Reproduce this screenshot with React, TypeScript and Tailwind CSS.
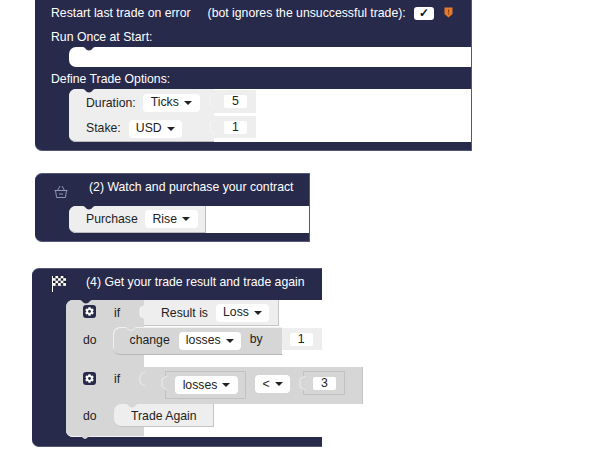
import { FaCog } from 'react-icons/fa'
import type { ReactNode } from 'react'

function Caret() {
  return <span className="ml-[5px] inline-block h-0 w-0 border-x-[4px] border-t-[4px] border-x-transparent border-t-[#222]" />
}

function Dropdown({ label, className = '' }: { label: string; className?: string }) {
  return (
    <span className={`flex h-[18px] items-center justify-center rounded-[4px] bg-white text-[#222] ${className}`}>
      {label}
      <Caret />
    </span>
  )
}

function NumField({ value, className = '' }: { value: string; className?: string }) {
  return (
    <span className={`flex h-[13px] w-[23px] items-center justify-center rounded-[2px] bg-white text-[#222] ${className}`}>
      {value}
    </span>
  )
}

// little dip at the top of a statement block
function Notch({ color, left = 14, line }: { color: string; left?: number; line?: string }) {
  return (
    <svg className="absolute top-0" style={{ left }} width="12" height="4" viewBox="0 0 12 4">
      <path d="M0 0 C2 0 3 3.5 6 3.5 C9 3.5 10 0 12 0" fill={color} stroke={line ?? 'none'} strokeWidth="0.8" />
    </svg>
  )
}

// bump under a statement block
function Bump({ color, left = 14 }: { color: string; left?: number }) {
  return (
    <svg className="absolute bottom-[-3px]" style={{ left }} width="10" height="3" viewBox="0 0 10 3">
      <path d="M0 0 C2 0 3 3 5 3 C7 3 8 0 10 0Z" fill={color} />
    </svg>
  )
}

// value tab sticking out to the left of an input
function Tab({ fill, stroke = '#f8f8f8', top = 4, left = -6 }: { fill: string; stroke?: string; top?: number; left?: number }) {
  return (
    <svg className="absolute" style={{ top, left }} width="7" height="14" viewBox="0 0 7 14">
      <path d="M7 0.5 C4 0.5 5 2 3.5 2 C2 2 2 4 2 7 C2 10 2 12 3.5 12 C5 12 4 13.5 7 13.5" fill={fill} stroke={stroke} strokeWidth="0.8" />
    </svg>
  )
}

function GearBox() {
  return (
    <span className="flex h-[13px] w-[13px] items-center justify-center rounded-[3px] bg-[#282a4c] text-white">
      <FaCog size={9} />
    </span>
  )
}

function Basket() {
  return (
    <svg width="14" height="14" viewBox="0 0 14 14" fill="none" stroke="#9da0b8" strokeWidth="0.9">
      <path d="M0.5 5.5H13.5M1.5 5.5L2.6 12.5H11.4L12.5 5.5M3.5 5.5L6 1M10.5 5.5L8 1M5 9H9" />
    </svg>
  )
}

function CheckerFlag() {
  const cells: ReactNode[] = []
  for (let r = 0; r < 4; r++) {
    for (let c = 0; c < 5; c++) {
      cells.push(
        <rect key={`${r}-${c}`} x={2 + c * 2.6} y={1 + r * 2.4} width="2.6" height="2.4" fill={(r + c) % 2 ? '#fff' : '#1b1b2b'} />,
      )
    }
  }
  return (
    <svg width="16" height="17" viewBox="0 0 16 17">
      <rect x="1" y="1" width="1" height="16" fill="#fff" />
      <rect x="2" y="1" width="13" height="9.6" fill="#fff" />
      {cells}
    </svg>
  )
}

function Shield() {
  return (
    <svg width="9" height="11" viewBox="0 0 9 11">
      <path d="M0.5 0.5H8.5V7L4.5 10.5L0.5 7Z" fill="#e8792b" />
      <rect x="4" y="2.5" width="1.2" height="3" fill="#8a4413" />
      <rect x="4" y="6.2" width="1.2" height="1.2" fill="#8a4413" />
    </svg>
  )
}

const NAVY = '#282a4c'
const LIGHT = '#eeeeee'
const GREY = '#d6d6d6'

export default function App() {
  return (
    <div
      className="h-[467px] w-[612px] overflow-hidden bg-white text-[12.25px] leading-none text-[#222]"
      style={{ fontFamily: '"Liberation Sans", Arial, sans-serif' }}
    >
      {/* (1) trade options, top is cut off */}
      <div className="ml-[35px] w-[437px] rounded-bl-[7px] border-r border-b border-[#55577a] bg-[#282a4c] text-white">
        <div className="relative h-[47px]">
          <div className="flex h-[26px] items-center pl-[16px]">
            <span>Restart last trade on error</span>
            <span className="ml-[17px]">(bot ignores the unsuccessful trade):</span>
            <span className="ml-[8px] flex h-[13px] w-[20px] items-center justify-center rounded-[3px] bg-white text-[12px] font-bold text-[#111]">✓</span>
            <span className="ml-[10px] -translate-y-[1px]"><Shield /></span>
          </div>
          <div className="flex h-[21px] items-center pt-[2px] pl-[16px]">Run Once at Start:</div>
        </div>
        <div className="relative ml-[34px] h-[20px] rounded-l-[7px] bg-white">
          <Notch color={NAVY} />
        </div>
        <div className="flex h-[22px] items-center pt-[2px] pl-[16px]">Define Trade Options:</div>
        <div className="relative ml-[34px] flex h-[53px] flex-col rounded-l-[7px] bg-white text-[#222]">
          <div className="flex h-[27px]">
            <div className="flex w-[145px] items-center rounded-tl-[7px] bg-[#eeeeee] pl-[17px]">
              <span className="pt-[2px]">Duration:</span>
              <Dropdown label="Ticks" className="ml-[7px] w-[57px]" />
            </div>
            <div className="relative mt-[1px] flex h-[23px] w-[42px] items-center bg-[#eeeeee] pl-[10px]">
              <Tab fill={LIGHT} top={4} />
              <NumField value="5" />
            </div>
          </div>
          <div className="flex h-[26px]">
            <div className="flex w-[145px] items-center rounded-bl-[7px] border-b border-[#b9b9b9] bg-[#eeeeee] pl-[17px]">
              <span>Stake:</span>
              <Dropdown label="USD" className="ml-[8px] w-[53px]" />
            </div>
            <div className="relative flex h-[22px] w-[42px] items-center bg-[#eeeeee] pl-[10px]">
              <Tab fill={LIGHT} top={4} />
              <NumField value="1" />
            </div>
          </div>
          <Notch color={NAVY} />
        </div>
        <div className="h-[8px]" />
      </div>

      {/* (2) purchase */}
      <div className="mt-[22px] ml-[35px] w-[275px] rounded-l-[7px] border-t border-r border-b border-[#55577a] bg-[#282a4c] text-white">
        <div className="flex h-[32px] items-center">
          <span className="ml-[19px] translate-y-[2px]"><Basket /></span>
          <span className="ml-[21px] -translate-y-[3px]">(2) Watch and purchase your contract</span>
        </div>
        <div className="relative ml-[34px] h-[27px] rounded-l-[7px] bg-white text-[#222]">
          <div className="flex h-[27px] w-[137px] items-center rounded-l-[7px] border-r border-b border-[#bbbbbb] bg-[#eeeeee] pl-[17px]">
            <span>Purchase</span>
            <Dropdown label="Rise" className="ml-[7px] w-[53px]" />
          </div>
          <Notch color={NAVY} />
        </div>
        <div className="h-[8px]" />
      </div>

      {/* (4) trade result */}
      <div className="mt-[26px] ml-[32px] w-[290px] rounded-l-[7px] border-t border-b border-[#55577a] bg-[#282a4c] text-white">
        <div className="flex h-[31px] items-center">
          <span className="ml-[19px] -translate-y-[1px]"><CheckerFlag /></span>
          <span className="ml-[19px] -translate-y-[2px]">(4) Get your trade result and trade again</span>
        </div>
        <div className="relative ml-[34px] rounded-l-[7px] bg-white text-[#222]">
          <div className="flex h-[27px]">
            <div className="relative flex w-[78px] items-start rounded-tl-[7px] bg-[#d6d6d6] pt-[5px] pl-[17px]">
              <GearBox />
              <span className="ml-[18px] pt-[2px]">if</span>
              <Notch color={NAVY} />
            </div>
            <div className="relative flex h-[26px] w-[135px] items-center border-r border-b border-[#c4c4c4] bg-[#eeeeee] pl-[17px]">
              <Tab fill={LIGHT} top={5} />
              <span className="pt-[2px]">Result is</span>
              <Dropdown label="Loss" className="ml-[8px] w-[53px]" />
            </div>
          </div>
          <div className="flex h-[28px]">
            <div className="flex w-[78px] items-center bg-[#d6d6d6] pb-[1px] pl-[17px]">do</div>
            <div className="relative z-10 -ml-[30px] flex w-[173px] items-center rounded-l-[7px] border-b border-[#b9b9b9] bg-[#d6d6d6] pl-[17px] shadow-[inset_1px_1px_0_#f0f0f0]">
              <span>change</span>
              <Dropdown label="losses" className="ml-[9px] w-[62px]" />
              <span className="ml-[9px] pb-[2px]">by</span>
              <Notch color={GREY} left={12} line="#f0f0f0" />
            </div>
            <div className="relative mt-[1px] flex h-[22px] w-[41px] items-center bg-[#eeeeee] pl-[8px]">
              <Tab fill={LIGHT} top={4} />
              <NumField value="1" />
            </div>
          </div>
          <div className="h-[12px] w-[78px] bg-[#d6d6d6]" />
          <div className="flex h-[37px] w-[297px] border-r border-[#c4c4c4] bg-[#d6d6d6]">
            <div className="relative flex h-[37px] w-[78px] items-start pt-[5px] pl-[17px]">
              <GearBox />
              <span className="ml-[18px] pt-[1px]">if</span>
              <Tab fill={GREY} top={5} left={72} stroke="#f2f2f2" />
            </div>
            <div className="relative mt-[4px] ml-[21px] flex h-[28px] w-[81px] items-center border border-[#c2c2c2] pl-[9px]">
              <Tab fill={GREY} top={4} stroke="#f2f2f2" />
              <Dropdown label="losses" className="w-[63px]" />
            </div>
            <Dropdown label="<" className="mt-[8px] ml-[9px] w-[35px]" />
            <div className="relative mt-[4px] ml-[13px] flex h-[24px] w-[42px] items-center border border-[#c2c2c2] pl-[9px]">
              <Tab fill={GREY} top={4} stroke="#f2f2f2" />
              <NumField value="3" />
            </div>
          </div>
          <div className="flex h-[23px]">
            <div className="flex w-[78px] items-center bg-[#d6d6d6] pt-[1px] pl-[17px]">do</div>
            <div className="relative -ml-[30px] flex w-[100px] items-center rounded-l-[7px] border-r border-b border-[#c4c4c4] bg-[#eeeeee] pt-[3px] pl-[17px]">
              Trade Again
              <Notch color={GREY} left={12} />
            </div>
          </div>
          <div className="relative h-[10px] w-[78px] rounded-bl-[7px] border-b border-[#f2f2f2] bg-[#d6d6d6]">
            <Bump color={GREY} />
          </div>
        </div>
        <div className="h-[9px]" />
      </div>
    </div>
  )
}
